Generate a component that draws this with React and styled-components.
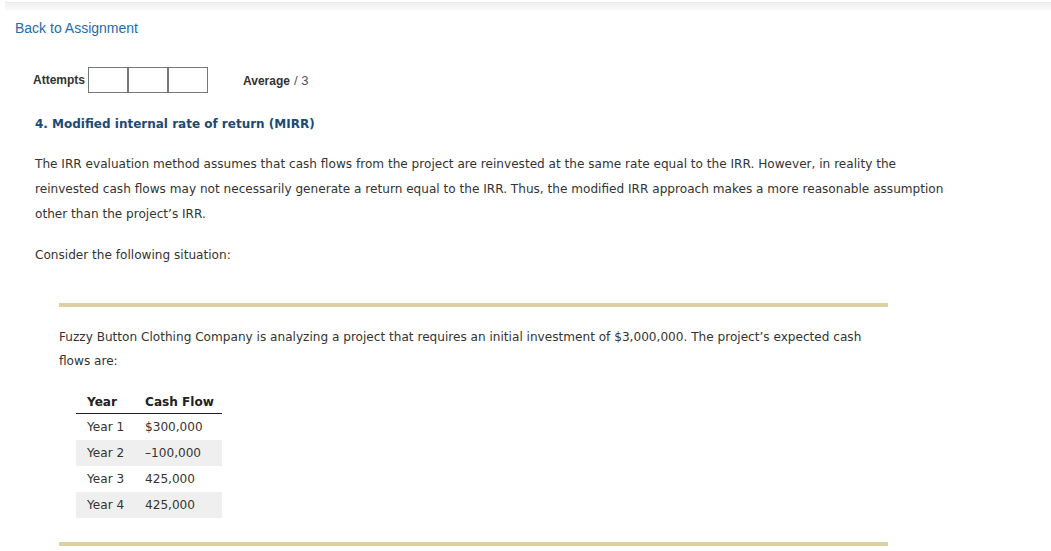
import React from "react";
import styled, { createGlobalStyle } from "styled-components";

const GlobalStyle = createGlobalStyle`
  body {
    margin: 0;
    background: #fff;
    font-family: "DejaVu Sans", Verdana, sans-serif;
    color: #333;
  }
`;

const Page = styled.div`
  width: 1051px;
  height: 551px;
  overflow: hidden;
  font-size: 12.1px;
`;

const TopBar = styled.div`
  margin: 2px 0 0 5px;
  height: 7px;
  border-top: 1px solid #e4e9e4;
  background: linear-gradient(#f1f2f1, #f9f9f9);
`;

const BackLink = styled.a`
  display: block;
  margin: 10px 0 0 15px;
  font-family: "Liberation Sans", Arial, sans-serif;
  font-size: 14px;
  line-height: 16px;
  color: #1f6ca8;
  text-decoration: none;
`;

const AttemptsRow = styled.div`
  display: flex;
  align-items: center;
  margin: 31px 0 0 33px;
  font-family: "Liberation Sans", Arial, sans-serif;
  font-size: 12px;
  color: #333;
`;

const Label = styled.span`
  font-weight: bold;
  margin-right: 3px;
`;

const Boxes = styled.div`
  display: flex;
  border: 1px solid #777;
`;

const Box = styled.div`
  width: 38px;
  height: 24px;
  border-left: ${(p) => (p.$first ? "none" : "2px solid #777")};
`;

const Average = styled.span`
  margin-left: 35px;
  font-weight: bold;
`;

const Slash = styled.span`
  font-weight: normal;
  font-size: 13px;
  color: #555;
  margin-left: 4px;
`;

const Content = styled.div`
  padding: 0 0 0 35px;
  width: 920px;
  color: #333;
`;

const Heading = styled.h2`
  margin: 23px 0 0;
  font-size: 12px;
  line-height: 16px;
  font-weight: bold;
  color: #1c4a73;
`;

const Para = styled.p`
  margin: ${(p) => p.$mt || 0}px 0 0;
  line-height: 25px;
`;

const Scenario = styled.div`
  margin: 35px 0 0 59px;
  width: 829px;
  border-top: 4px solid #ddd1a2;
  border-bottom: 4px solid #ddd1a2;
  padding: 18px 0 24px;
`;

const InnerPara = styled.p`
  margin: 0;
  line-height: 24px;
  width: 820px;
`;

const Table = styled.table`
  margin: 17px 0 0 17px;
  border-collapse: collapse;
  table-layout: fixed;
  width: 146px;
`;

const Th = styled.th`
  width: ${(p) => p.$w}px;
  text-align: left;
  font-weight: bold;
  padding: 4px 0 3px 11px;
  line-height: 16px;
  border-bottom: 1px solid #222;
  color: #222;
  white-space: nowrap;
`;

const Row = styled.tr`
  background: ${(p) => (p.$shade ? "#efefef" : "transparent")};
`;

const Td = styled.td`
  padding: 5px 0 5px 11px;
  line-height: 16px;
  color: #333;
  white-space: nowrap;
`;

const flows = [
  ["Year 1", "$300,000"],
  ["Year 2", "\u2013100,000"],
  ["Year 3", "425,000"],
  ["Year 4", "425,000"],
];

export default function App() {
  return (
    <Page>
      <GlobalStyle />
      <TopBar />
      <BackLink href="#">Back to Assignment</BackLink>
      <AttemptsRow>
        <Label>Attempts</Label>
        <Boxes>
          <Box $first />
          <Box />
          <Box />
        </Boxes>
        <Average>
          Average<Slash>/ 3</Slash>
        </Average>
      </AttemptsRow>
      <Content>
        <Heading>4. Modified internal rate of return (MIRR)</Heading>
        <Para $mt={20}>
          The IRR evaluation method assumes that cash flows from the project are reinvested at the
          same rate equal to the IRR. However, in reality the reinvested cash flows may not
          necessarily generate a return equal to the IRR. Thus, the modified IRR approach makes a
          more reasonable assumption other than the project’s IRR.
        </Para>
        <Para $mt={16}>Consider the following situation:</Para>
      </Content>
      <Scenario>
        <InnerPara>
          Fuzzy Button Clothing Company is analyzing a project that requires an initial investment
          of $3,000,000. The project’s expected cash flows are:
        </InnerPara>
        <Table>
          <thead>
            <tr>
              <Th $w={47}>Year</Th>
              <Th $w={77}>Cash Flow</Th>
            </tr>
          </thead>
          <tbody>
            {flows.map(([year, cash], i) => (
              <Row key={year} $shade={i % 2 === 1}>
                <Td>{year}</Td>
                <Td>{cash}</Td>
              </Row>
            ))}
          </tbody>
        </Table>
      </Scenario>
    </Page>
  );
}
